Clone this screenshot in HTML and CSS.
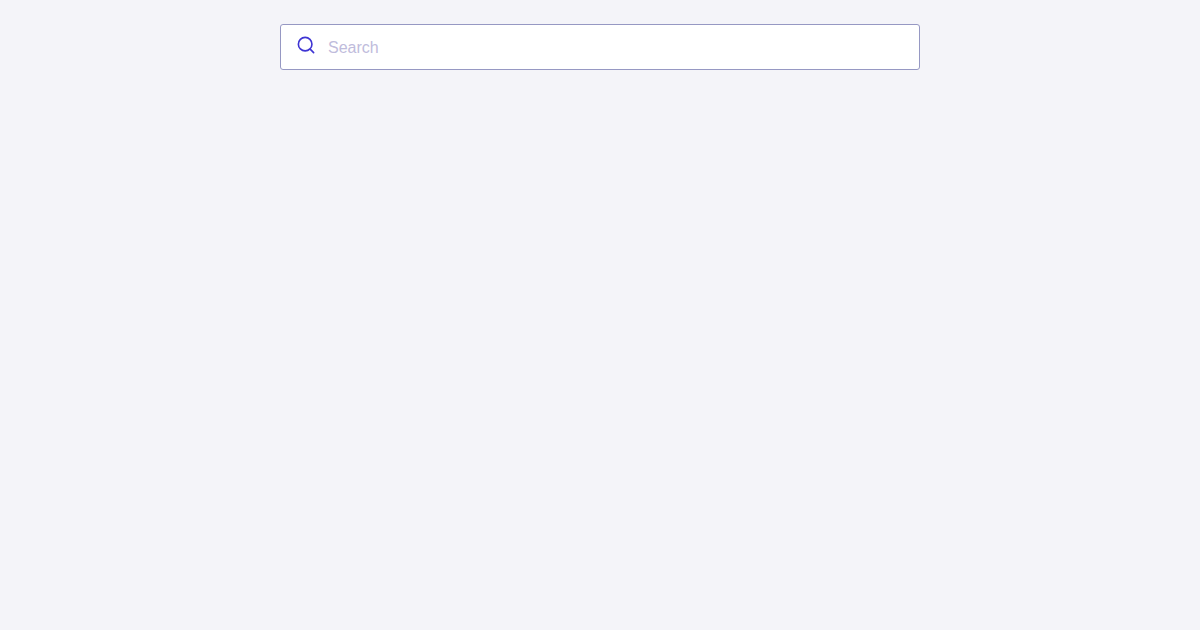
FILE: index.html
```
<!DOCTYPE html>
<html lang="en">

<head>
    <meta charset="UTF-8">
    <meta name="viewport" content="width=device-width, initial-scale=1.0">
    <title>Search</title>
    <link rel="stylesheet" href="styles.css">
</head>

<body>

    <main class="container">
        <form class="search-form" role="search">
            <label class="search-label" for="search" aria-label="Search">
                <svg class="search-icon" viewBox="0 0 20 20" aria-hidden="true">
                    <path d="M14.386 14.386l4.0877 4.0877-4.0877-4.0877c-2.9418 2.9419-7.7115 2.9419-10.6533 0-2.9419-2.9418-2.9419-7.7115 0-10.6533 2.9418-2.9419 7.7115-2.9419 10.6533 0 2.9419 2.9418 2.9419 7.7115 0 10.6533z"></path>
                </svg>
            </label>
            <input class="search-input" type="search" id="search" placeholder="Search" autocomplete="off">
        </form>
    </main>

</body>

</html>
```

FILE: styles.css
```
* {
    box-sizing: border-box;
}

body {
    font-family: "Liberation Sans", Arial, sans-serif;
    margin: 0;
    background: #f4f4f9;
}

.container {
    max-width: 688px;
    margin: 0 auto;
    padding: 24px;
}

.search-form {
    display: flex;
    align-items: center;
    background: #fff;
    border: 1px solid #9698c3;
    border-radius: 3px;
}

.search-form:focus-within {
    border-color: #3e34d3;
}

.search-label {
    display: flex;
    padding: 0 12px 4px 16px;
    cursor: pointer;
}

.search-icon {
    width: 18px;
    height: 18px;
    fill: none;
    stroke: #3e34d3;
    stroke-width: 1.8;
    stroke-linecap: round;
    stroke-linejoin: round;
}

.search-input {
    flex: 1;
    min-width: 0;
    height: 44px;
    padding: 2px 0 0 1px;
    border: 0;
    outline: 0;
    background: transparent;
    color: #262627;
    font: inherit;
    font-size: 16px;
    appearance: none;
}

.search-input::placeholder {
    color: #bfbcdc;
    opacity: 1;
}
```
